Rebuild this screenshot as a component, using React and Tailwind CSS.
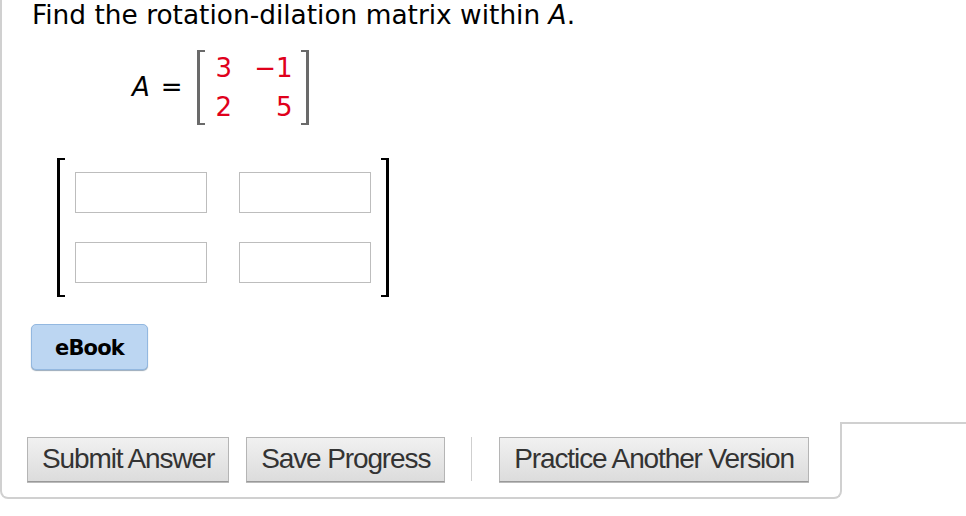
import React from 'react';

const sans = { fontFamily: '"DejaVu Sans", Verdana, sans-serif' };
const arial = { fontFamily: '"Liberation Sans", Arial, Helvetica, sans-serif' };

function Bracket({ side, className }) {
  const edge = side === 'left' ? 'border-l-[3px]' : 'border-r-[3px]';
  return <div className={`w-[8px] self-stretch border-y-[2px] ${edge} ${className}`} />;
}

function BarButton({ children }) {
  return (
    <button
      type="button"
      style={arial}
      className="h-[45px] px-[14px] text-[28px] tracking-[-1.12px] text-[#333] bg-gradient-to-b from-[#f1f1f1] to-[#dcdcdc] border border-[#b5b5b5] border-b-[#999] shadow-[0_1px_0_#bbb]"
    >
      {children}
    </button>
  );
}

export default function App() {
  const cells = [0, 1, 2, 3];

  return (
    <div className="w-[966px] h-[516px] bg-white overflow-hidden flex flex-col">
      {/* question body */}
      <div className="h-[422px] border-l-2 border-[#d0d0d0] pl-[30px]">
        <h1 style={sans} className="text-[26.4px] leading-[30px] text-black">
          Find the rotation-dilation matrix within <i>A</i>.
        </h1>

        {/* given matrix */}
        <div className="flex items-center mt-[20px] ml-[100px] h-[75px]" style={sans}>
          <span className="text-[26px] italic">A</span>
          <span className="text-[26px] ml-[11px]">=</span>
          <div className="flex h-[75px] ml-[14px]">
            <Bracket side="left" className="border-[#6a6a6a]" />
            <div className="grid grid-cols-[auto_auto] gap-x-[22px] gap-y-[10px] pl-[11px] pr-[9px] py-[4px] text-[26px] leading-[28px] text-[#e0001b]">
              <span>3</span>
              <span className="text-right">−1</span>
              <span>2</span>
              <span className="text-right">5</span>
            </div>
            <Bracket side="right" className="border-[#6a6a6a]" />
          </div>
        </div>

        {/* answer matrix */}
        <div className="flex mt-[33px] ml-[25px] h-[139px]">
          <Bracket side="left" className="border-black" />
          <div className="grid grid-cols-2 gap-x-[32px] gap-y-[29px] px-[10px] py-[14px]">
            {cells.map((c) => (
              <input
                key={c}
                type="text"
                className="w-[132px] h-[41px] border border-[#bdbdbd] bg-white outline-none"
              />
            ))}
          </div>
          <Bracket side="right" className="border-black" />
        </div>

        {/* ebook */}
        <button
          type="button"
          style={sans}
          className="mt-[27px] -ml-[1px] w-[117px] h-[46px] pt-[3px] rounded-[5px] bg-[#bcd6f2] border border-[#93b8e0] shadow-[0_1px_1px_#9ab] text-[21px] font-bold text-black tracking-[-0.8px]"
        >
          eBook
        </button>
      </div>

      {/* button bar */}
      <div className="flex">
        <div className="w-[842px] h-[77px] border-l-2 border-r-2 border-b-2 border-[#d0d0d0] rounded-b-[8px] flex items-center pl-[25px] pb-[1px]">
          <BarButton>Submit Answer</BarButton>
          <div className="ml-[17px]">
            <BarButton>Save Progress</BarButton>
          </div>
          <div className="w-px h-[44px] bg-[#cfcfcf] ml-[26px]" />
          <div className="ml-[27px]">
            <BarButton>Practice Another Version</BarButton>
          </div>
        </div>
        <div className="flex-1 border-t-2 border-[#d0d0d0]" />
      </div>
    </div>
  );
}
